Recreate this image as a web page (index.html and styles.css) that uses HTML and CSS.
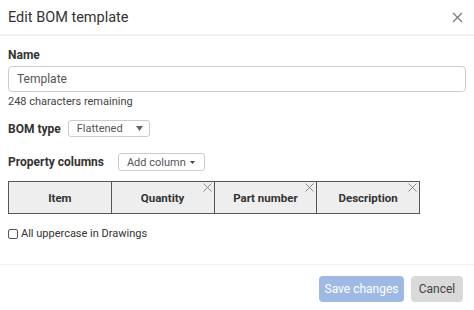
FILE: index.html
```html
<!DOCTYPE html>
<html lang="en">
<head>
  <meta charset="UTF-8">
  <title>Edit BOM template</title>
  <link rel="stylesheet" href="styles.css">
</head>
<body>

  <div class="dialog">
    <header class="dialog-header">
      <h1>Edit BOM template</h1>
      <button class="close" type="button" aria-label="Close">
        <svg width="11" height="11" viewBox="0 0 11 11"><path d="M1 1L10 10M10 1L1 10" stroke="#777" stroke-width="1.2" fill="none"/></svg>
      </button>
    </header>

    <div class="dialog-body">
      <label class="field-label" for="name">Name</label>
      <input id="name" class="text-input" type="text" value="Template">
      <div class="hint">248 characters remaining</div>

      <div class="row row-type">
        <span class="field-label">BOM type</span>
        <div class="select select-type">
          <span>Flattened</span>
          <svg width="7" height="5" viewBox="0 0 7 5"><path d="M0 0H7L3.5 5Z" fill="#666"/></svg>
        </div>
      </div>

      <div class="row row-columns">
        <span class="field-label">Property columns</span>
        <div class="select select-add">
          <span>Add column</span>
          <svg width="5" height="3" viewBox="0 0 5 3"><path d="M0 0H5L2.5 3Z" fill="#444"/></svg>
        </div>
      </div>

      <div class="columns">
        <div class="col">Item</div>
        <div class="col">Quantity
          <svg class="remove" width="9" height="9" viewBox="0 0 9 9"><path d="M0.5 0.5L8.5 8.5M8.5 0.5L0.5 8.5" stroke="#8a8a8a" stroke-width="1" fill="none"/></svg>
        </div>
        <div class="col">Part number
          <svg class="remove" width="9" height="9" viewBox="0 0 9 9"><path d="M0.5 0.5L8.5 8.5M8.5 0.5L0.5 8.5" stroke="#8a8a8a" stroke-width="1" fill="none"/></svg>
        </div>
        <div class="col">Description
          <svg class="remove" width="9" height="9" viewBox="0 0 9 9"><path d="M0.5 0.5L8.5 8.5M8.5 0.5L0.5 8.5" stroke="#8a8a8a" stroke-width="1" fill="none"/></svg>
        </div>
      </div>

      <label class="check">
        <span class="box"></span>
        All uppercase in Drawings
      </label>
    </div>

    <footer class="dialog-footer">
      <button class="btn btn-primary" type="button">Save changes</button>
      <button class="btn btn-cancel" type="button">Cancel</button>
    </footer>
  </div>

</body>
</html>
```

FILE: styles.css
```css
body {
  margin: 0;
  background: #fff;
  font-family: Roboto, "Liberation Sans", sans-serif;
  color: #333;
}

.dialog {
  width: 474px;
  height: 310px;
  background: #fff;
}

.dialog-header {
  height: 36px;
  display: flex;
  align-items: center;
  justify-content: space-between;
  padding: 0 10px 0 8px;
  border-bottom: 2px solid #f0f0f0;
  box-sizing: border-box;
}

.dialog-header h1 {
  margin: 0;
  font-size: 14.5px;
  font-weight: 400;
  color: #333;
  padding-top: 1px;
}

.close {
  border: 0;
  background: none;
  padding: 0;
  width: 13px;
  height: 13px;
  display: flex;
  align-items: center;
  justify-content: center;
}

.dialog-body {
  padding: 11px 8px 0 8px;
}

.field-label {
  display: block;
  font-size: 12px;
  font-weight: 700;
  line-height: 16px;
  color: #333;
}

.text-input {
  display: block;
  box-sizing: border-box;
  width: 100%;
  height: 26px;
  margin-top: 3px;
  padding: 0 8px;
  border: 1px solid #ccc;
  border-radius: 4px;
  font-family: inherit;
  font-size: 12px;
  color: #555;
  outline: none;
}

.hint {
  font-size: 11px;
  line-height: 15px;
  margin-top: 2px;
  color: #444;
}

.row {
  display: flex;
  align-items: center;
  gap: 7px;
}

.row-type {
  margin-top: 11px;
}

.row-columns {
  margin-top: 16px;
  gap: 14px;
}

.select {
  box-sizing: border-box;
  height: 17px;
  display: flex;
  align-items: center;
  justify-content: space-between;
  border: 1px solid #ccc;
  border-radius: 3px;
  font-size: 11px;
  color: #555;
}

.select-type {
  width: 82px;
  padding: 0 6px 0 8px;
}

.select-add {
  width: 87px;
  height: 18px;
  padding: 0 9px 0 8px;
}

.columns {
  display: flex;
  width: 412px;
  margin-top: 10px;
  border: 1px solid #555;
  box-sizing: border-box;
  background: #eee;
}

.col {
  position: relative;
  flex: 1;
  height: 31px;
  display: flex;
  align-items: center;
  justify-content: center;
  font-size: 11.5px;
  font-weight: 700;
  color: #333;
}

.col + .col {
  border-left: 1px solid #555;
}

.remove {
  position: absolute;
  top: 1px;
  right: 2px;
}

.check {
  display: flex;
  align-items: center;
  gap: 3px;
  margin-top: 12px;
  font-size: 11px;
  line-height: 16px;
  color: #333;
}

.check .box {
  width: 8px;
  height: 8px;
  border: 1px solid #555;
  border-radius: 2px;
}

.dialog-footer {
  margin-top: 22px;
  border-top: 1px solid #f0f0f0;
  display: flex;
  justify-content: flex-end;
  gap: 7px;
  padding: 11px 11px 0 0;
}

.btn {
  height: 26px;
  border: 0;
  border-radius: 4px;
  font-family: inherit;
  font-size: 12px;
  padding: 0;
  white-space: nowrap;
}

.btn-primary {
  width: 85px;
  background: #9db9e4;
  color: #fff;
}

.btn-cancel {
  width: 52px;
  background: #d9d9d9;
  color: #444;
}
```
